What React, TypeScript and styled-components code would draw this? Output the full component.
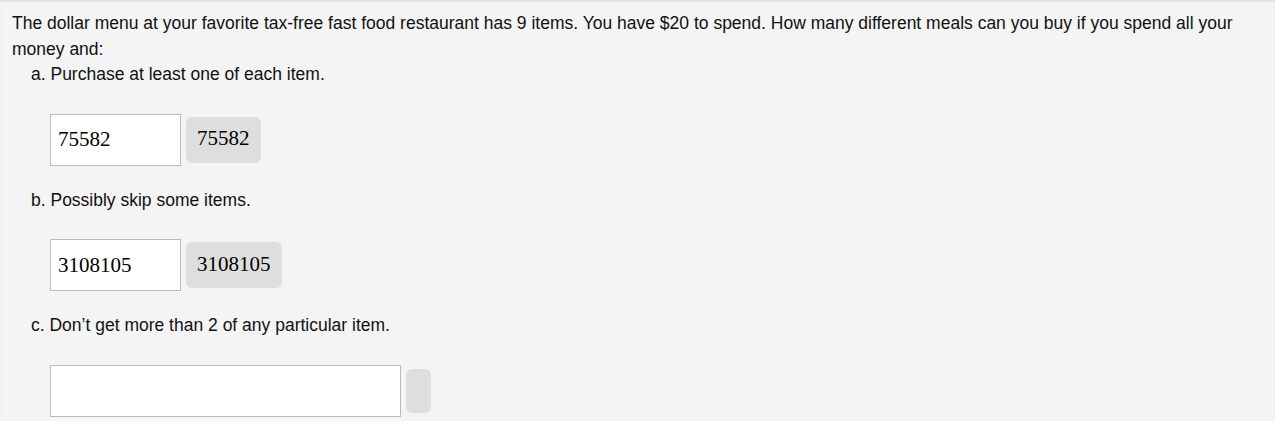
import React from "react";
import styled, { createGlobalStyle } from "styled-components";

const Global = createGlobalStyle`
  html, body { margin: 0; padding: 0; background: #f4f4f4; }
  body { font-family: "Liberation Sans", Arial, sans-serif; }
`;

const Page = styled.div`
  min-height: 421px;
  box-sizing: border-box;
  background: #f4f4f4;
  box-shadow: inset 0 2px 3px -1px rgba(0, 0, 0, 0.12);
  padding: 11px 12px 0 12px;
  color: #111;
  font-size: 17.5px;
  line-height: 25.6px;
`;

const Prompt = styled.div``;

const Part = styled.div`
  padding-left: 19px;
`;

const Label = styled.div`
  margin-bottom: 26px;
`;

const AnswerRow = styled.div`
  display: flex;
  align-items: center;
  gap: 5px;
  padding-left: 38px;
  height: 52px;
  margin-bottom: 22px;
`;

const Input = styled.div<{ $w: number }>`
  box-sizing: border-box;
  width: ${(p) => p.$w}px;
  height: 52px;
  background: #fff;
  border: 1px solid #bbb;
  display: flex;
  align-items: center;
  padding-left: 7px;
  font-family: "Liberation Serif", "Times New Roman", serif;
  font-size: 21px;
  color: #000;
`;

const Preview = styled.div<{ $empty?: boolean }>`
  box-sizing: border-box;
  height: ${(p) => (p.$empty ? 44 : 46)}px;
  min-width: 25px;
  padding: 0 11px;
  border-radius: 6px;
  background: #dedede;
  display: flex;
  align-items: center;
  justify-content: center;
  padding-bottom: 2px;
  font-family: "Liberation Serif", "Times New Roman", serif;
  font-size: 21px;
  color: #000;
`;

export default function App() {
  return (
    <>
      <Global />
      <Page>
        <Prompt>
          The dollar menu at your favorite tax-free fast food restaurant has 9
          items. You have $20 to spend. How many different meals can you buy if
          you spend all your money and:
        </Prompt>
        <Part>
          <Label>a. Purchase at least one of each item.</Label>
        </Part>
        <AnswerRow>
          <Input $w={131}>75582</Input>
          <Preview>75582</Preview>
        </AnswerRow>
        <Part>
          <Label>b. Possibly skip some items.</Label>
        </Part>
        <AnswerRow>
          <Input $w={131}>3108105</Input>
          <Preview>3108105</Preview>
        </AnswerRow>
        <Part>
          <Label>c. Don’t get more than 2 of any particular item.</Label>
        </Part>
        <AnswerRow>
          <Input $w={351}></Input>
          <Preview $empty></Preview>
        </AnswerRow>
      </Page>
    </>
  );
}
